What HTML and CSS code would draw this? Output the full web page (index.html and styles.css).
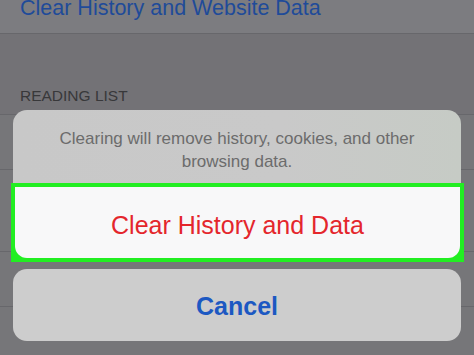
FILE: index.html
```html
<!DOCTYPE html>
<html>
<head>
<meta charset="utf-8">
<link rel="stylesheet" href="styles.css">
</head>
<body>
<div class="screen">
  <div class="settings">
    <div class="row row-top"><span class="link">Clear History and Website Data</span></div>
    <div class="section-header">READING LIST</div>
    <div class="row row-a"></div>
    <div class="row row-b"></div>
    <div class="row row-c"></div>
    <div class="row row-d"></div>
  </div>
  <div class="overlay">
    <div class="sheet">
      <div class="message">Clearing will remove history, cookies, and other browsing data.</div>
      <div class="highlight">
        <div class="action destructive">Clear History and Data</div>
      </div>
    </div>
    <div class="cancel">Cancel</div>
  </div>
</div>
</body>
</html>
```

FILE: styles.css
```css
html, body {
  margin: 0;
  padding: 0;
}
body {
  width: 474px;
  height: 355px;
  overflow: hidden;
  background: #737276;
  font-family: "Liberation Sans", Arial, sans-serif;
}
.screen {
  position: relative;
  width: 474px;
  height: 355px;
  overflow: hidden;
}
.settings {
  display: flex;
  flex-direction: column;
}
.row {
  border-bottom: 1px solid #67676b;
  box-sizing: border-box;
}
.row-top {
  height: 34px;
  background: #7c7c80;
  display: flex;
  align-items: flex-end;
  padding: 0 0 13px 20px;
  overflow: hidden;
}
.link {
  font-size: 21.5px;
  line-height: 24px;
  color: #1f4b99;
  white-space: nowrap;
}
.section-header {
  height: 81px;
  box-sizing: border-box;
  padding: 53px 0 0 20px;
  font-size: 15.5px;
  line-height: 18px;
  color: #38383a;
  border-bottom: 1px solid #67676b;
}
.row-a { height: 55px; background: #767679; }
.row-b { height: 82px; background: #767679; }
.row-c { height: 55px; background: #767679; }
.row-d { height: 60px; background: #767679; border-bottom: none; }

.overlay {
  position: absolute;
  left: 0;
  top: 0;
  width: 100%;
  height: 100%;
  box-sizing: border-box;
  padding: 110px 13px 0 13px;
  display: flex;
  flex-direction: column;
  gap: 7px;
}
.sheet {
  display: flex;
  flex-direction: column;
  border-radius: 14px;
  background: linear-gradient(90deg, #c8c8c8 0%, #c9c9c9 60%, #c6cbc5 100%);
}
.message {
  padding: 17px 40px 10px;
  font-size: 17px;
  line-height: 23px;
  color: #6c6c6c;
  text-align: center;
}
.highlight {
  margin: 0 -3px 0 -2px;
  padding: 4px;
  background: #22ee22;
}
.action {
  height: 71px;
  box-sizing: border-box;
  padding-top: 5px;
  background: #f8f8f9;
  border-radius: 0 0 12px 12px;
  display: flex;
  align-items: center;
  justify-content: center;
  font-size: 25px;
}
.destructive {
  color: #e4262c;
}
.cancel {
  height: 72px;
  box-sizing: border-box;
  padding-top: 2px;
  border-radius: 14px;
  background: #cdcdcd;
  display: flex;
  align-items: center;
  justify-content: center;
  font-size: 25px;
  font-weight: bold;
  color: #1c58c2;
}
```
